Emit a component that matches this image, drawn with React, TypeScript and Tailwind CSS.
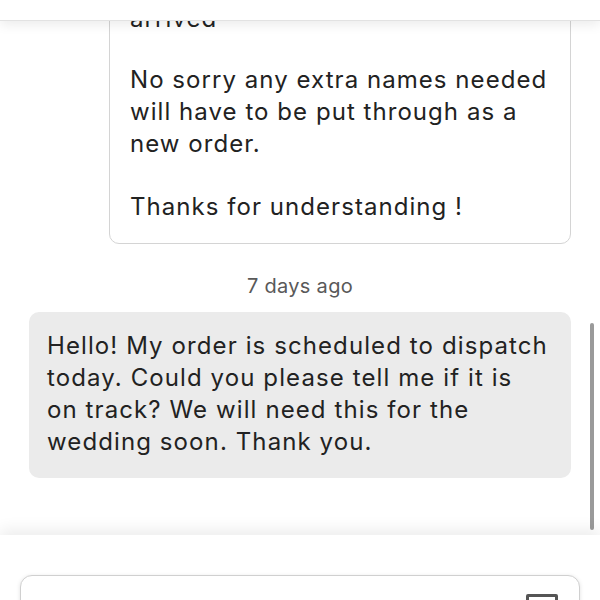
import React from "react";

const font = { fontFamily: "Inter, 'Noto Sans', sans-serif" };

function SellerMessage() {
  return (
    <div className="ml-[109px] w-[462px] -mt-[39px] rounded-b-[10px] border border-[#d4d4d4] bg-white px-[20px] pt-[20px] pb-[20px] text-[24px] leading-[32px] tracking-[1.05px] text-[#222222]">
      <p>arrived</p>
      <p className="mt-[29px]">
        No sorry any extra names needed
        <br />
        will have to be put through as a
        <br />
        new order.
      </p>
      <p className="mt-[31px]">Thanks for understanding !</p>
    </div>
  );
}

function BuyerMessage() {
  return (
    <div className="ml-[29px] w-[542px] rounded-[10px] bg-[#ebebeb] px-[18px] pt-[18px] pb-[20px] text-[24px] leading-[32px] tracking-[1.1px] text-[#222222]">
      Hello! My order is scheduled to dispatch
      <br />
      today. Could you please tell me if it is
      <br />
      on track? We will need this for the
      <br />
      wedding soon. Thank you.
    </div>
  );
}

export default function App() {
  return (
    <div className="relative flex h-[600px] w-[600px] flex-col overflow-hidden bg-white" style={font}>
      {/* top bar */}
      <div className="relative z-10 h-[21px] shrink-0 border-b border-[#e2e2e2] bg-white shadow-[0_4px_12px_rgba(0,0,0,0.08)]" />

      {/* conversation */}
      <div className="relative h-[514px] shrink-0 overflow-hidden">
        <SellerMessage />
        <div className="mt-[28px] text-center text-[20px] leading-[28px] tracking-[0.3px] text-[#595959]">7 days ago</div>
        <div className="mt-[12px]">
          <BuyerMessage />
        </div>
        <div className="absolute right-[6px] top-[302px] h-[207px] w-[4px] rounded-full bg-[#9a9a9a]" />
      </div>

      {/* reply box */}
      <div className="relative z-10 flex-1 bg-white px-[20px] pt-[40px] shadow-[0_-6px_14px_rgba(0,0,0,0.07)]">
        <div className="relative h-[80px] rounded-[12px] border border-[#d0d0d0] bg-white shadow-[0_1px_4px_rgba(0,0,0,0.12)]">
          <div className="absolute right-[21px] top-[18px] h-[26px] w-[32px] rounded-[2px] border-[3px] border-[#555555]" />
        </div>
      </div>
    </div>
  );
}
